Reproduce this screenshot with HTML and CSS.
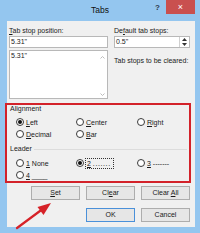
FILE: index.html
```html
<!DOCTYPE html>
<html>
<head>
<meta charset="utf-8">
<link rel="stylesheet" href="styles.css">
</head>
<body>
<div class="window">
  <div class="titlebar">
    <span class="title">Tabs</span>
    <div class="controls">
      <span class="help">?</span>
      <span class="close">×</span>
    </div>
  </div>
  <div class="client">
    <div class="top">
      <div class="col-left">
        <div class="label"><u>T</u>ab stop position:</div>
        <div class="textbox">5.31"</div>
        <div class="listbox">
          <div class="item">5.31"</div>
          <div class="scroll">
            <svg width="5" height="3" viewBox="0 0 5 3"><polyline points="0.5,2.5 2.5,0.5 4.5,2.5" fill="none" stroke="#b4b4b4" stroke-width="0.9"/></svg>
            <svg width="5" height="3" viewBox="0 0 5 3"><polyline points="0.5,0.5 2.5,2.5 4.5,0.5" fill="none" stroke="#b4b4b4" stroke-width="0.9"/></svg>
          </div>
        </div>
      </div>
      <div class="col-right">
        <div class="label">De<u>f</u>ault tab stops:</div>
        <div class="spin">
          <span class="val">0.5"</span>
          <div class="spinbtns">
            <svg width="5" height="3" viewBox="0 0 5 3"><polygon points="0,3 2.5,0 5,3" fill="#333"/></svg>
            <svg width="5" height="3" viewBox="0 0 5 3"><polygon points="0,0 2.5,3 5,0" fill="#333"/></svg>
          </div>
        </div>
        <div class="label clear-label">Tab stops to be cleared:</div>
      </div>
    </div>
    <div class="group">
      <div class="legend">Alignment</div>
      <div class="radios">
        <div class="opt"><span class="radio on"></span><span><u>L</u>eft</span></div>
        <div class="opt"><span class="radio"></span><span><u>C</u>enter</span></div>
        <div class="opt"><span class="radio"></span><span><u>R</u>ight</span></div>
        <div class="opt"><span class="radio"></span><span><u>D</u>ecimal</span></div>
        <div class="opt"><span class="radio"></span><span><u>B</u>ar</span></div>
      </div>
      <div class="legend line">Leader</div>
      <div class="radios leader">
        <div class="opt"><span class="radio"></span><span><u>1</u> None</span></div>
        <div class="opt"><span class="radio on"></span><span class="focus"><u>2</u> <span class="dots">.......</span></span></div>
        <div class="opt"><span class="radio"></span><span><u>3</u> -------</span></div>
        <div class="opt"><span class="radio"></span><span><u>4</u> ____</span></div>
      </div>
    </div>
    <div class="btnrow">
      <div class="btn"><u>S</u>et</div>
      <div class="btn">Cl<u>e</u>ar</div>
      <div class="btn">Clear <u>A</u>ll</div>
    </div>
    <div class="btnrow second">
      <div class="btn default">OK</div>
      <div class="btn">Cancel</div>
    </div>
  </div>
  <svg class="arrow" width="200" height="233" viewBox="0 0 200 233">
    <line x1="17" y1="228" x2="42" y2="209.5" stroke="#d62228" stroke-width="2.2" stroke-linecap="round"/>
    <polygon points="51,203 43.5,215 37.5,207" fill="#d62228"/>
  </svg>
</div>
</body>
</html>
```
FILE: styles.css
```css
* { box-sizing: border-box; }
html, body { margin: 0; padding: 0; }
body {
  width: 200px;
  height: 233px;
  overflow: hidden;
  font-family: "Liberation Sans", Arial, sans-serif;
  font-size: 7px;
  color: #1a1a1a;
}
.window {
  position: relative;
  width: 200px;
  height: 233px;
  background: #94c6ef;
  padding: 0 5px 6px 7px;
  display: flex;
  flex-direction: column;
}
.titlebar {
  height: 21px;
  margin: 0 -5px 0 -7px;
  display: grid;
  grid-template-columns: 1fr auto 1fr;
}
.title {
  grid-column: 2;
  font-size: 8.5px;
  line-height: 21px;
  color: #111;
}
.controls {
  grid-column: 3;
  justify-self: end;
  display: flex;
  align-items: flex-start;
}
.help {
  font-weight: bold;
  font-size: 8px;
  color: #2b3a4a;
  margin-right: 6px;
  line-height: 15px;
}
.close {
  width: 29px;
  height: 14px;
  background: #c9504f;
  color: #fff;
  font-size: 9px;
  line-height: 14px;
  text-align: center;
  margin-right: 5px;
}
.client {
  flex: 1;
  background: #f0f0f0;
  padding: 0 5px 0 2px;
  display: flex;
  flex-direction: column;
}
.top { display: flex; gap: 6px; margin-top: 5px; }
.col-left { width: 99px; display: flex; flex-direction: column; }
.col-right { flex: 1; display: flex; flex-direction: column; }
.label { height: 9px; line-height: 9px; white-space: nowrap; }
.textbox {
  margin-top: 1px;
  height: 12px;
  background: #fff;
  border: 1px solid #b8b8b8;
  padding-left: 1px;
  line-height: 10px;
}
.listbox {
  margin-top: 2px;
  height: 49px;
  background: #fff;
  border: 1px solid #b8b8b8;
  display: flex;
}
.listbox .item { flex: 1; padding-left: 1px; line-height: 9px; }
.scroll {
  width: 10px;
  display: flex;
  flex-direction: column;
  justify-content: space-between;
  align-items: center;
  padding: 5px 0 2px;
}
.scroll svg { display: block; }
.spin {
  margin-top: 1px;
  height: 12px;
  background: #fff;
  border: 1px solid #b8b8b8;
  display: flex;
}
.spin .val { flex: 1; padding-left: 1px; line-height: 10px; }
.spinbtns {
  width: 10px;
  border-left: 1px solid #d0d0d0;
  display: flex;
  flex-direction: column;
  align-items: center;
  justify-content: space-around;
}
.spinbtns svg { display: block; }
.clear-label { margin-top: 8px; }
.group {
  margin: 4px -1px 0 -4px;
  border: 2px solid #d3222a;
  height: 80px;
}
.legend {
  height: 8px;
  line-height: 8px;
  padding-left: 3px;
  display: flex;
  align-items: center;
}
.legend.line { margin-top: 5px; }
.legend.line::after {
  content: "";
  flex: 1;
  border-top: 1px solid #dcdcdc;
  margin: 0 2px 0 2px;
}
.radios {
  display: grid;
  grid-template-columns: 60px 61px 1fr;
  padding-left: 9px;
  margin-top: 3px;
}
.radios.leader { margin-top: 4px; }
.opt {
  height: 12px;
  display: flex;
  align-items: center;
  gap: 2px;
  white-space: nowrap;
}
.radio {
  width: 8px;
  height: 8px;
  border: 1px solid #3a3a3a;
  border-radius: 50%;
  background: #fff;
  display: flex;
  align-items: center;
  justify-content: center;
  flex: none;
}
.radio.on::after {
  content: "";
  width: 4px;
  height: 4px;
  border-radius: 50%;
  background: #111;
}
.focus {
  display: inline-block;
  border: 1px dotted #333;
  padding: 0 2px 0 1px;
  margin-left: -1px;
  line-height: 9px;
  white-space: nowrap;
}
.dots { letter-spacing: 0.6px; color: #000; }
.btnrow {
  display: flex;
  justify-content: flex-end;
  gap: 6px;
  margin-top: 3px;
}
.btnrow.second { margin-top: 8px; }
.btn {
  width: 49px;
  height: 14px;
  background: #e6e6e6;
  border: 1px solid #adadad;
  text-align: center;
  line-height: 12px;
}
.btn.default { border-color: #4a90d9; }
.arrow {
  position: absolute;
  left: 0;
  top: 0;
  pointer-events: none;
}
```
